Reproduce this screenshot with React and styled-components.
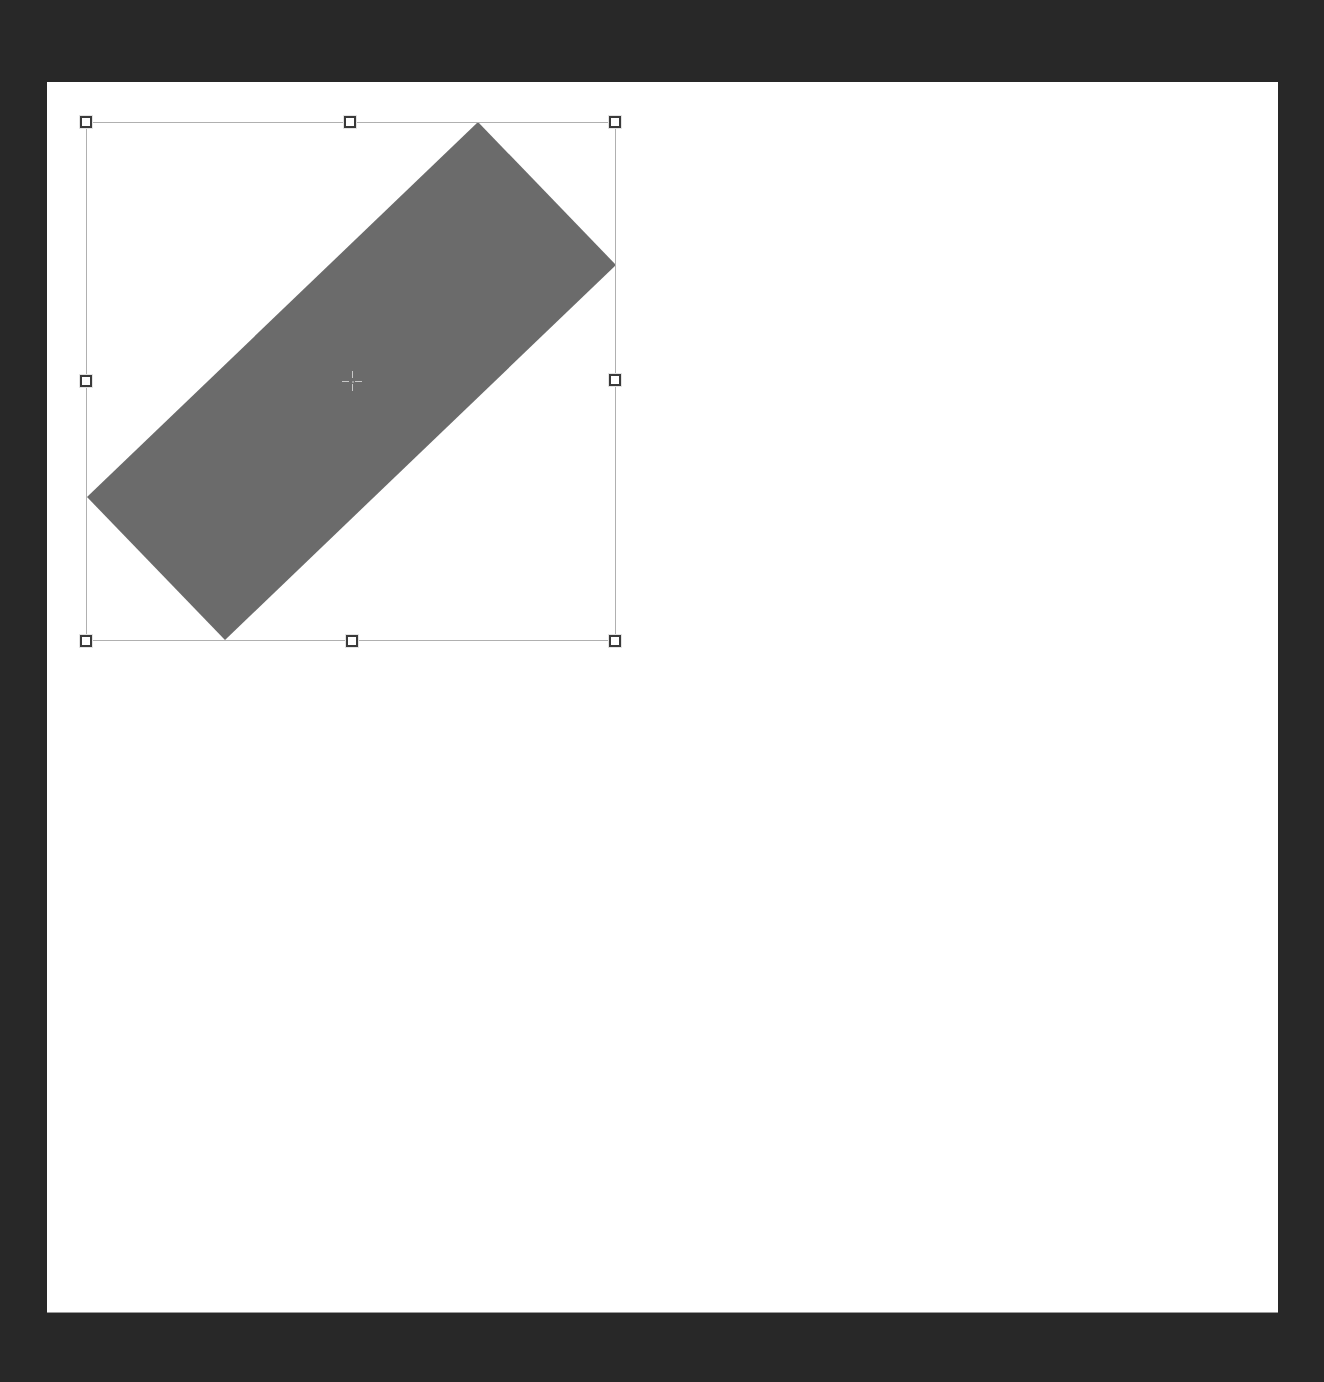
import React from 'react';
import styled, { createGlobalStyle } from 'styled-components';

const Global = createGlobalStyle`
  html, body {
    margin: 0;
    padding: 0;
    background: #282828;
    font-family: 'Liberation Sans', Arial, sans-serif;
  }
`;

const Workspace = styled.div`
  width: 1324px;
  height: 1382px;
  padding: 82px 0 0 47px;
  box-sizing: border-box;
  background: #282828;
`;

const Artboard = styled.div`
  position: relative;
  width: 1231px;
  height: 1230px;
  background: #ffffff;
  box-shadow: 0 1px 0 #9a9a9a;
`;

const Layer = styled.svg`
  position: absolute;
  left: 0;
  top: 0;
  overflow: visible;
`;

const Handle = styled.div`
  position: absolute;
  width: 8px;
  height: 8px;
  margin: -6px 0 0 -6px;
  background: #fff;
  border: 2px solid #3a3a3a;
  box-shadow: 0 0 0 1px #e4e4e4;
`;

const handles = [
  [39, 40], [303, 40], [568, 40],
  [39, 299], [568, 298],
  [39, 559], [305, 559], [568, 559],
];

function Pivot({ x, y }) {
  return (
    <g stroke="#c8c8c8" strokeWidth="1.5" shapeRendering="crispEdges">
      <line x1={x - 10} y1={y + 0.5} x2={x - 3} y2={y + 0.5} />
      <line x1={x + 3} y1={y + 0.5} x2={x + 10} y2={y + 0.5} />
      <line x1={x + 0.5} y1={y - 10} x2={x + 0.5} y2={y - 3} />
      <line x1={x + 0.5} y1={y + 3} x2={x + 0.5} y2={y + 10} />
      <rect x={x - 0.5} y={y - 0.5} width="2" height="2" fill="#9a9a9a" stroke="none" />
    </g>
  );
}

export default function App() {
  return (
    <>
      <Global />
      <Workspace>
        <Artboard>
          <Layer width="1231" height="1230">
            <polygon points="431,40 569,183 178,558 40,415" fill="#6b6b6b" />
            <rect
              x="39.5"
              y="40.5"
              width="529"
              height="518"
              fill="none"
              stroke="#b0b0b0"
              strokeWidth="1"
            />
            <Pivot x={305} y={299} />
          </Layer>
          {handles.map(([x, y], i) => (
            <Handle key={i} style={{ left: x, top: y }} />
          ))}
        </Artboard>
      </Workspace>
    </>
  );
}
